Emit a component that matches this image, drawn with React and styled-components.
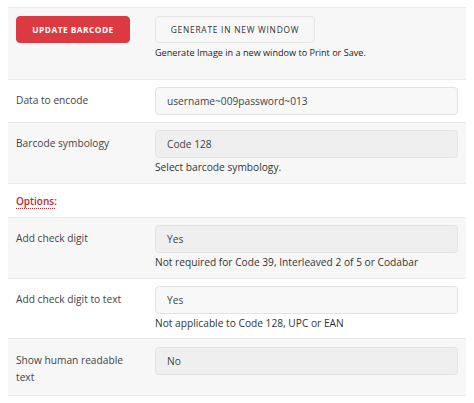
import React from "react";
import styled, { createGlobalStyle } from "styled-components";

const GlobalStyle = createGlobalStyle`
  body {
    margin: 0;
    background: #ffffff;
    font-family: "Open Sans", "Liberation Sans", sans-serif;
    color: #333333;
  }
`;

const Page = styled.div`
  padding: 7px 8px 0 8px;
`;

const Row = styled.div`
  display: grid;
  grid-template-columns: 147px 1fr;
  background-color: ${(p) => (p.$shaded ? "#f7f7f7" : "#ffffff")};
  border-top: 1px solid #ebebeb;
  padding: ${(p) => p.$top || "7px"} 8px 0 0;
  height: ${(p) => p.$h};
  box-sizing: border-box;
`;

const Label = styled.div`
  padding: 5px 20px 0 8px;
  font-size: 10.2px;
  line-height: 17px;
  color: #444444;
`;

const Field = styled.div`
  display: flex;
  flex-direction: column;
  align-items: flex-start;
`;

const Input = styled.div`
  width: 100%;
  height: 28px;
  box-sizing: border-box;
  border: 1px solid #e3e3e3;
  border-radius: 4px;
  background-color: ${(p) => (p.$select ? "#efefef" : "#f8f8f8")};
  padding: 0 11px;
  font-size: 10.2px;
  line-height: 26px;
  color: #444444;
`;

const Help = styled.div`
  font-size: ${(p) => (p.$strong ? "9.1px" : "10.2px")};
  font-weight: ${(p) => (p.$strong ? 500 : 400)};
  line-height: 14px;
  margin-top: ${(p) => p.$gap || "2px"};
  color: ${(p) => (p.$strong ? "#222222" : "#333333")};
`;

const Button = styled.div`
  height: 27px;
  box-sizing: border-box;
  border-radius: 4px;
  display: flex;
  align-items: center;
  justify-content: center;
  font-size: 8.4px;
  letter-spacing: ${(p) => (p.$primary ? "0.45px" : "0.75px")};
  text-transform: uppercase;
  font-weight: ${(p) => (p.$primary ? 700 : 500)};
  color: ${(p) => (p.$primary ? "#ffffff" : "#333333")};
  background-color: ${(p) => (p.$primary ? "#db3a42" : "#f7f7f7")};
  border: 1px solid ${(p) => (p.$primary ? "#db3a42" : "#e6e6e6")};
  width: ${(p) => p.$w};
`;

const Left = styled.div`
  padding-left: 8px;
`;

const Options = styled.div`
  border-top: 1px solid #ebebeb;
  height: 34px;
  padding-left: 8px;
  display: flex;
  align-items: center;
  box-sizing: border-box;
`;

const OptionsText = styled.span`
  color: #c0272d;
  font-size: 10px;
  font-weight: 600;
  text-decoration: underline dotted #c0272d;
  text-underline-offset: 3px;
`;

const Bottom = styled.div`
  border-top: 1px solid #ebebeb;
`;

export default function App() {
  return (
    <Page>
      <GlobalStyle />
      <Row $shaded $h="72px" $top="8px">
        <Left>
          <Button $primary $w="114px">Update Barcode</Button>
        </Left>
        <Field>
          <Button $w="160px">Generate in new window</Button>
          <Help $strong $gap="3px">Generate Image in a new window to Print or Save.</Help>
        </Field>
      </Row>
      <Row $h="43px">
        <Label>Data to encode</Label>
        <Field>
          <Input>username~009password~013</Input>
        </Field>
      </Row>
      <Row $shaded $h="61px">
        <Label>Barcode symbology</Label>
        <Field>
          <Input $select>Code 128</Input>
          <Help>Select barcode symbology.</Help>
        </Field>
      </Row>
      <Options>
        <OptionsText>Options:</OptionsText>
      </Options>
      <Row $shaded $h="61px">
        <Label>Add check digit</Label>
        <Field>
          <Input $select>Yes</Input>
          <Help>Not required for Code 39, Interleaved 2 of 5 or Codabar</Help>
        </Field>
      </Row>
      <Row $h="60px">
        <Label>Add check digit to text</Label>
        <Field>
          <Input>Yes</Input>
          <Help>Not applicable to Code 128, UPC or EAN</Help>
        </Field>
      </Row>
      <Row $shaded $h="57px" $top="8px">
        <Label>Show human readable text</Label>
        <Field>
          <Input $select>No</Input>
        </Field>
      </Row>
      <Bottom />
    </Page>
  );
}
